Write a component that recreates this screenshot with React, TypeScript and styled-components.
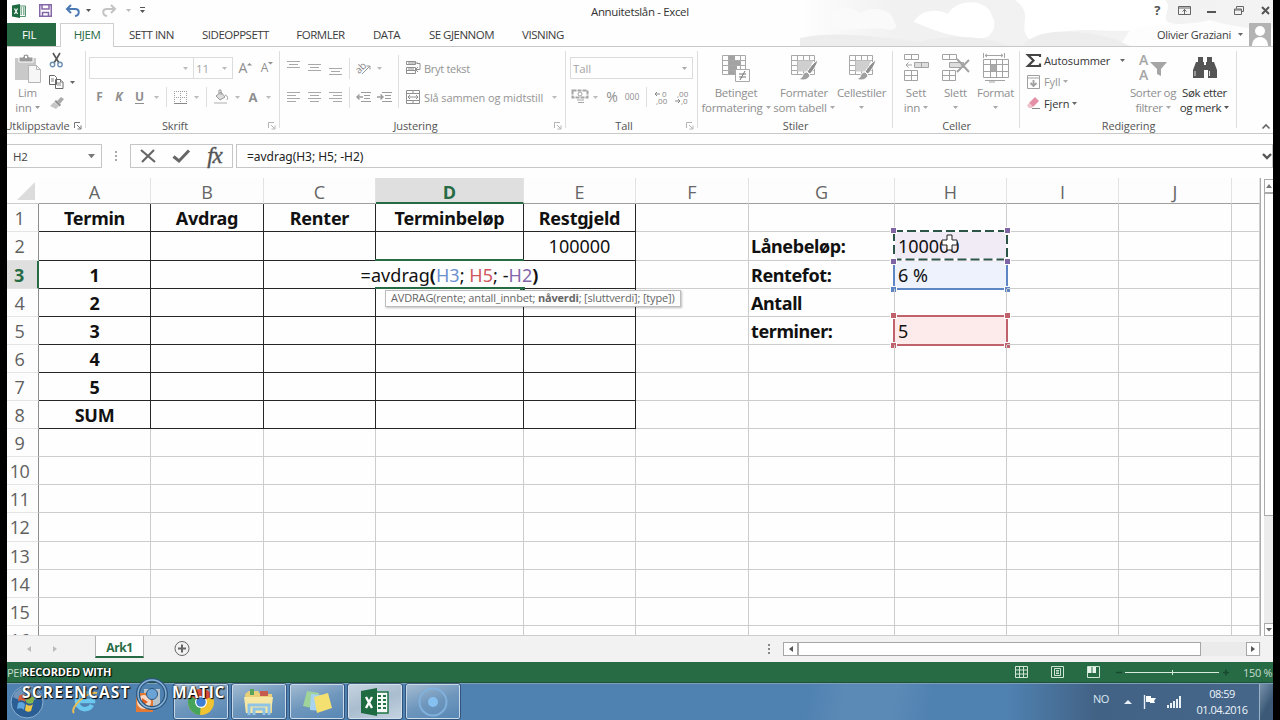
import type { ReactNode } from "react";
import styled, { createGlobalStyle, css } from "styled-components";

const UI = `"Open Sans", "Noto Sans", sans-serif`;
const SHEET = `"Noto Sans", "Open Sans", sans-serif`;
const GREEN = "#276b45";

const GlobalStyle = createGlobalStyle`
  * {
    box-sizing: border-box;
  }

  body {
    margin: 0;
    background: #000;
    overflow: hidden;
  }
`;

const Screen = styled.div`
  position: relative;
  width: 1280px;
  height: 720px;
  padding: 0 7px;
  background: #000;
  font-family: ${UI};
  overflow: hidden;
`;

const Window = styled.div`
  position: relative;
  display: flex;
  flex-direction: column;
  width: 1266px;
  height: 720px;
  background: #fefefe;
  overflow: hidden;
`;

const Clouds = styled.svg`
  position: absolute;
  top: 0;
  right: 0;
  width: 473px;
  height: 46px;
`;

const Svg = styled.svg`
  display: block;
  flex: none;
  overflow: visible;
`;

const Slot = styled.div<{ $w: number; $justify?: string }>`
  display: flex;
  flex: none;
  align-items: center;
  justify-content: ${({ $justify }) => $justify ?? "center"};
  width: ${({ $w }) => $w}px;
`;

/* ---------- title bar ---------- */

const TitleBar = styled.div`
  position: relative;
  display: flex;
  align-items: center;
  height: 23px;
  padding-bottom: 2px;
`;

const TitleText = styled.div`
  width: 98px;
  margin: 2px 0 0 5px;
  color: #333;
  font-size: 11.5px;
  letter-spacing: -0.35px;
  white-space: nowrap;
`;

const TabBar = styled.div`
  position: relative;
  display: flex;
  height: 24px;
  border-bottom: 1px solid #c9c9c9;
`;

const FileTab = styled.div`
  width: 49px;
  margin-right: 4px;
  padding-right: 5px;
  background: ${GREEN};
  color: #fff;
  font-size: 11.5px;
  line-height: 23px;
  text-align: center;
  letter-spacing: -0.3px;
`;

const Tab = styled.div<{ $w: number; $active?: boolean; $ls?: number }>`
  width: ${({ $w }) => $w}px;
  height: 24px;
  color: ${({ $active }) => ($active ? GREEN : "#3c3c3c")};
  font-size: 11.5px;
  line-height: 24px;
  text-align: center;
  white-space: nowrap;
  letter-spacing: ${({ $ls }) => $ls ?? -0.5}px;
  ${({ $active }) =>
    $active &&
    css`
      border: 1px solid #cfcfcf;
      border-bottom: 0;
      background: #fefefe;
      line-height: 21px;
    `}
`;

const UserName = styled.div`
  margin-left: auto;
  color: #3c3c3c;
  font-size: 11px;
  line-height: 23px;
  letter-spacing: -0.25px;
  white-space: nowrap;
`;

/* ---------- ribbon ---------- */

const Ribbon = styled.div`
  display: flex;
  height: 87px;
  border-bottom: 1px solid #c9c9c9;
`;

const Group = styled.div<{ $w: number }>`
  position: relative;
  display: flex;
  flex: none;
  flex-direction: column;
  width: ${({ $w }) => $w}px;

  &::after {
    content: "";
    position: absolute;
    top: 4px;
    right: 0;
    width: 1px;
    height: 77px;
    background: #dedede;
  }
`;

const GroupBody = styled.div`
  display: flex;
  height: 70px;
`;

const GroupLabel = styled.div<{ $shift?: number; $ls?: number }>`
  display: flex;
  align-items: center;
  justify-content: center;
  height: 16px;
  padding-right: ${({ $shift }) => $shift ?? 0}px;
  color: #555;
  font-size: 11px;
  letter-spacing: ${({ $ls }) => $ls ?? -0.1}px;
  white-space: nowrap;
`;

const Launcher = styled.div`
  position: absolute;
  right: 4px;
  bottom: 3px;
`;

const Column = styled.div<{ $w?: number; $pl?: number }>`
  display: flex;
  flex: none;
  flex-direction: column;
  width: ${({ $w }) => ($w ? `${$w}px` : "auto")};
  padding-left: ${({ $pl }) => $pl ?? 0}px;
`;

const ToolRow = styled.div<{ $h?: number; $mt?: number }>`
  display: flex;
  align-items: center;
  height: ${({ $h }) => $h ?? 22}px;
  margin-top: ${({ $mt }) => $mt ?? 0}px;
`;

const Combo = styled.div<{ $w: number; $joined?: boolean }>`
  display: flex;
  flex: none;
  align-items: center;
  justify-content: space-between;
  width: ${({ $w }) => $w}px;
  height: 22px;
  padding: 0 5px 0 2px;
  border: 1px solid #dcdcdc;
  border-left-width: ${({ $joined }) => ($joined ? 0 : 1)}px;
  color: #a5a5a5;
  font-size: 11.5px;
  letter-spacing: -0.1px;
`;

const Letter = styled.span<{ $bold?: boolean; $italic?: boolean; $size?: number; $color?: string }>`
  color: ${({ $color }) => $color ?? "#8f8f8f"};
  font-size: ${({ $size }) => $size ?? 12}px;
  font-weight: ${({ $bold }) => ($bold ? 700 : 400)};
  font-style: ${({ $italic }) => ($italic ? "italic" : "normal")};
  line-height: 1;
`;

const Underlined = styled(Letter)`
  border-bottom: 1px solid #8f8f8f;
`;

const Divider = styled.div<{ $h: number }>`
  flex: none;
  width: 1px;
  height: ${({ $h }) => $h}px;
  background: #dfdfdf;
`;

const ToolText = styled.span<{ $dark?: boolean; $ls?: number }>`
  color: ${({ $dark }) => ($dark ? "#333" : "#949494")};
  font-size: 11px;
  letter-spacing: ${({ $ls }) => $ls ?? -0.1}px;
  white-space: nowrap;
`;

const BigButton = styled.div<{ $w: number; $dark?: boolean; $ls?: number }>`
  display: flex;
  flex: none;
  flex-direction: column;
  align-items: center;
  width: ${({ $w }) => $w}px;
  padding-top: 7px;
  color: ${({ $dark }) => ($dark ? "#333" : "#8f8f8f")};
  font-size: 11.5px;
  line-height: 15px;
  letter-spacing: ${({ $ls }) => $ls ?? -0.15}px;
  white-space: nowrap;
`;

const BigIcon = styled.div`
  height: 31px;
`;

const BigLine = styled.div`
  display: flex;
  align-items: center;
  gap: 3px;
  height: 15px;
`;

/* ---------- formula bar ---------- */

const FormulaBar = styled.div`
  display: flex;
  height: 24px;
  margin-top: 10px;
  color: #333;
`;

const FormulaBox = styled.div<{ $w?: number; $pl?: number }>`
  display: flex;
  flex: ${({ $w }) => ($w ? "none" : 1)};
  align-items: center;
  width: ${({ $w }) => ($w ? `${$w}px` : "auto")};
  padding-left: ${({ $pl }) => $pl ?? 0}px;
  border: 1px solid #c6c6c6;
  font-size: 11.5px;
  letter-spacing: -0.2px;
`;

const NameBox = styled(FormulaBox)`
  justify-content: space-between;
  padding-right: 6px;
  border-left: 0;
  color: #444;
`;

const FormulaText = styled.span`
  flex: 1;
  color: #222;
  font-family: ${SHEET};
  font-size: 12px;
  letter-spacing: -0.03px;
`;

const Fx = styled.span`
  color: #555;
  font-family: "Liberation Serif", serif;
  font-size: 23px;
  font-style: italic;
  letter-spacing: -1px;
  line-height: 20px;
  -webkit-text-stroke: 0.4px #555;
`;

/* ---------- sheet ---------- */

const SheetArea = styled.div`
  display: flex;
  height: 468px;
  padding-top: 10px;
`;

const Grid = styled.div`
  display: grid;
  grid-template-columns: 32px 112px 113px 112px 148px 112px 113px 146px 112px 112px 113px 28px;
  grid-template-rows: 26.4px repeat(15, 28.1px) 1fr;
  width: 1254px;
  height: 459px;
  border-right: 1px solid #ababab;
  border-bottom: 1px solid #ababab;
  overflow: hidden;
`;

const ColHead = styled.div<{ $on?: boolean }>`
  padding-top: 2px;
  border-right: 1px solid #e3e3e3;
  border-bottom: ${({ $on }) => ($on ? `2px solid ${GREEN}` : "1px solid #9f9f9f")};
  background: ${({ $on }) => ($on ? "#dfdfdf" : "#fdfdfd")};
  color: ${({ $on }) => ($on ? GREEN : "#666")};
  font-size: 18px;
  font-weight: ${({ $on }) => ($on ? 700 : 400)};
  line-height: 24px;
  text-align: center;
`;

const Corner = styled.div`
  display: flex;
  align-items: flex-end;
  justify-content: flex-end;
  padding: 0 4px 3px 0;
  border-bottom: 1px solid #ccc;
`;

const RowHead = styled.div<{ $on?: boolean }>`
  padding-right: 6px;
  border-right: ${({ $on }) => ($on ? `2px solid ${GREEN}` : "1px solid #8d8d8d")};
  border-bottom: 1px solid #e4e4e4;
  background: ${({ $on }) => ($on ? "#dfdfdf" : "#fdfdfd")};
  color: ${({ $on }) => ($on ? GREEN : "#606060")};
  font-size: 18px;
  font-weight: ${({ $on }) => ($on ? 700 : 400)};
  line-height: 28px;
  letter-spacing: -0.5px;
  text-align: center;
  overflow: hidden;
`;

const Cell = styled.div<{ $box?: boolean; $bold?: boolean; $center?: boolean; $span?: number; $ls?: number }>`
  position: relative;
  grid-column: span ${({ $span }) => $span ?? 1};
  padding-left: ${({ $center }) => ($center ? 0 : 3)}px;
  border-right: 1px solid ${({ $box }) => ($box ? "#262626" : "#cdcdcd")};
  border-bottom: 1px solid ${({ $box }) => ($box ? "#262626" : "#cdcdcd")};
  color: #111;
  font-family: ${SHEET};
  font-size: 18px;
  font-weight: ${({ $bold }) => ($bold ? 700 : 400)};
  line-height: 28px;
  letter-spacing: ${({ $ls, $bold }) => $ls ?? ($bold ? -0.25 : 0)}px;
  text-align: ${({ $center }) => ($center ? "center" : "left")};
  white-space: nowrap;
`;

const LoanLabel = styled(Cell)`
  padding-left: 2px;
  letter-spacing: -0.4px;
`;

const CellText = styled.span`
  position: relative;
  z-index: 2;
`;

const Ref = styled.span<{ $color: string }>`
  color: ${({ $color }) => $color};
`;

const EditEdge = styled.div<{ $bottom?: boolean }>`
  position: absolute;
  left: 111px;
  width: 149px;
  height: 2px;
  background: ${GREEN};
  ${({ $bottom }) => ($bottom ? "bottom: -1px;" : "top: -2px;")}
`;

const FillHandle = styled.div`
  position: absolute;
  right: 110px;
  bottom: -3px;
  width: 5px;
  height: 4px;
  background: ${GREEN};
`;

const Tooltip = styled.div`
  position: absolute;
  z-index: 3;
  top: 290px;
  left: 385px;
  height: 17px;
  width: 296px;
  padding-left: 5px;
  border: 1px solid #bdbdbd;
  background: #fefefe;
  box-shadow: 1px 1px 2px rgba(0, 0, 0, 0.25);
  color: #666;
  font-size: 11px;
  line-height: 14px;
  letter-spacing: -0.17px;
  white-space: nowrap;
`;

const RangeMark = styled.div<{ $color: string; $fill: string; $dashed?: boolean }>`
  position: absolute;
  inset: -2px;
  border: 2px solid ${({ $color }) => $color};
  background: ${({ $fill }) => $fill};
  ${({ $dashed }) =>
    $dashed &&
    css`
      z-index: 1;
      border: 0;
    `}
`;

const Handle = styled.i<{ $color: string; $x: "left" | "right"; $y: "top" | "bottom"; $out?: boolean }>`
  position: absolute;
  ${({ $x }) => $x}: ${({ $out }) => ($out ? -3 : -5)}px;
  ${({ $y }) => $y}: ${({ $out }) => ($out ? -3 : -5)}px;
  width: 7px;
  height: 7px;
  border: 1px solid #fff;
  background: ${({ $color }) => $color};
`;

const Ants = styled.svg`
  position: absolute;
  inset: 0;
  width: 100%;
  height: 100%;
  overflow: visible;
`;

const CrossCursor = styled.svg`
  position: absolute;
  z-index: 4;
  top: 234px;
  left: 941px;
`;

const ScrollRail = styled.div`
  display: flex;
  flex-direction: column;
  width: 9px;
  margin-left: 3px;
  padding-top: 1px;
  background: #fefefe;
`;

const RailPart = styled.div<{ $h: number; $plain?: boolean }>`
  display: flex;
  flex: none;
  align-items: center;
  justify-content: center;
  height: ${({ $h }) => $h}px;
  border: ${({ $plain }) => ($plain ? "0" : "1px solid #ababab")};
  border-right: 0;
  background: ${({ $plain }) => ($plain ? "#ececec" : "#fefefe")};

  & + & {
    border-top-width: ${({ $plain }) => ($plain ? 0 : 1)}px;
  }
`;

/* ---------- sheet tabs and status bar ---------- */

const SheetTabs = styled.div`
  display: flex;
  height: 26px;
  background: #f2f2f2;
`;

const SheetTab = styled.div`
  width: 49px;
  height: 22px;
  margin-right: 30px;
  border: 1px solid #b5b5b5;
  border-top: 0;
  border-bottom: 2px solid ${GREEN};
  background: #fefefe;
  color: ${GREEN};
  font-size: 12px;
  font-weight: 700;
  line-height: 24px;
  letter-spacing: -0.4px;
  text-align: center;
`;

const ScrollTrack = styled.div`
  display: flex;
  width: 478px;
  height: 14px;
  margin-top: 6px;
  background: #ebebeb;
`;

const ScrollPart = styled.div<{ $w: number }>`
  display: flex;
  flex: none;
  align-items: center;
  justify-content: center;
  width: ${({ $w }) => $w}px;
  border: 1px solid #a6a6a6;
  background: #fefefe;
`;

const StatusBar = styled.div`
  display: flex;
  align-items: center;
  height: 21px;
  border-bottom: 1px solid #20513a;
  background: ${GREEN};
  color: #c5dccd;
  font-size: 11px;
  letter-spacing: -0.3px;
  white-space: nowrap;
`;

/* ---------- taskbar ---------- */

const Taskbar = styled.div`
  display: flex;
  flex: 1;
  border-top: 1px solid #7e9fb8;
  background:
    linear-gradient(90deg, transparent 79%, rgba(62, 88, 118, 0.75) 86%, rgba(66, 94, 125, 0.75) 100%),
    linear-gradient(100deg, transparent 0 63%, rgba(255, 255, 255, 0.07) 66% 70%, transparent 73%),
    #4f81b1;
`;

const TaskButton = styled.div<{ $w: number; $framed?: boolean; $active?: boolean }>`
  display: flex;
  flex: none;
  align-items: center;
  justify-content: center;
  width: ${({ $w }) => $w}px;
  height: 35px;
  ${({ $framed, $active }) =>
    $framed &&
    css`
      margin: 0 2px;
      border: 1px solid rgba(215, 229, 241, 0.85);
      border-radius: 2px;
      outline: 1px solid rgba(24, 48, 78, 0.55);
      background: ${$active
        ? "linear-gradient(160deg, #c6d3df, #a9bdcf 50%, #c3d2df)"
        : "linear-gradient(160deg, #a2bad0, #6f97bd 50%, #5787b4)"};
    `}
`;

const Clock = styled.div`
  width: 58px;
  padding-top: 2px;
  color: #eef4f9;
  font-size: 11px;
  line-height: 16px;
  letter-spacing: -0.5px;
  text-align: center;
  white-space: nowrap;
`;

const Lang = styled.div`
  width: 26px;
  color: #dde8f1;
  font-size: 11px;
  letter-spacing: -0.6px;
  line-height: 30px;
`;

const ShowDesktop = styled.div`
  width: 14px;
  margin-left: auto;
  border-left: 1px solid #9db3c6;
  background: linear-gradient(120deg, #7892ab, #3c5a78 60%);
`;

/* ---------- recorder watermark ---------- */

const Watermark = styled.div`
  position: absolute;
  z-index: 5;
  top: 664px;
  left: 22px;
  color: #fff;
  font-weight: 700;
  text-shadow: 1px 1px 1px #000, 0 0 2px #000;
`;

const WatermarkSmall = styled.div`
  font-size: 11px;
  line-height: 15px;
  letter-spacing: -0.12px;
  white-space: nowrap;
`;

const WatermarkLarge = styled.div`
  display: flex;
  align-items: center;
  height: 30px;
  font-size: 15.5px;
  letter-spacing: 1.2px;
`;

const WatermarkWord = styled.span<{ $w?: number; $ls?: number }>`
  width: ${({ $w }) => ($w ? `${$w}px` : "auto")};
  line-height: 26px;
  padding-bottom: 4px;
  letter-spacing: ${({ $ls }) => $ls ?? 1.2}px;
`;

const Caret = ({ color = "#999", size = 5 }: { color?: string; size?: number }) => (
  <Svg width={size} height={size * 0.6} viewBox="0 0 5 3">
    <path d="M0 0h5L2.5 3z" fill={color} />
  </Svg>
);

const LauncherIcon = ({ color = "#b5b5b5" }: { color?: string }) => (
  <Launcher>
    <Svg width="8" height="8" viewBox="0 0 8 8" fill="none" stroke={color}>
      <path d="M.5 6V.5H6M3 3l3.5 3.5M7 3.5V7H3.5" />
    </Svg>
  </Launcher>
);

const Lines = ({ rows }: { rows: [number, number, number][] }) => (
  <Svg width="14" height="14" viewBox="0 0 14 14" stroke="#a9a9a9">
    {rows.map(([x, w, y]) => (
      <path key={y} d={`M${x} ${y + 0.5}h${w}`} />
    ))}
  </Svg>
);

const ExcelIcon = ({ size }: { size: number }) => (
  <Svg width={size} height={size} viewBox="0 0 28 28">
    <path d="M15 4h12v21H15z" fill="#f6faf7" stroke="#217346" strokeWidth="1.5" />
    <path d="M17 8h3M22 8h3M17 12h3M22 12h3M17 16h3M22 16h3M17 20h3M22 20h3" stroke="#217346" strokeWidth="2" />
    <path d="M0 3l16-3v28L0 25z" fill="#1e6b41" />
    <path d="M5 9l6 11M11 9L5 20" stroke="#fff" strokeWidth="2.4" />
  </Svg>
);

const TableIcon = ({ children, x = 0 }: { children?: ReactNode; x?: number }) => (
  <Svg width="28" height="30" viewBox="0 0 28 30" fill="none" stroke="#a9a9a9">
    <g transform={`translate(${x} 0)`}>
      <path d="M.5 1.5h23v19H.5zM.5 6.5h23M.5 11.5h23M.5 16.5h23M6.5 1.5v19M12.5 1.5v19M18.5 1.5v19" />
      {children}
    </g>
  </Svg>
);

const BrushOverlay = () => (
  <>
    <path d="M6.5 6.5h16l-6 11h-10z" fill="#cfcfcf" stroke="none" />
    <path d="M27 6c-4 2-9 8-11 12l3 2c3-3 7-9 8-14z" fill="#909090" stroke="#fff" />
    <path d="M16 18c-3 0-4 2-5 5-1 1-3 2-4 2 5 2 11 1 12-4z" fill="#a0a0a0" stroke="#fff" />
  </>
);

const PasteIcon = () => (
  <Svg width="28" height="30" viewBox="0 0 28 30">
    <path d="M1 4h21v22H1z" fill="#c9c9c9" />
    <path d="M5 8V3h4c0-4 6-4 6 0h4v5z" fill="#999" stroke="#fff" />
    <circle cx="12" cy="3" r="1.2" fill="#fff" />
    <path d="M14.500 11.500h8l4 4v13h-12z" fill="#f6f6f6" stroke="#b5b5b5" />
    <path d="M22.500 11.500v4h4" fill="none" stroke="#b5b5b5" />
  </Svg>
);

const ClipboardGroup = () => (
  <Group $w={79}>
    <GroupBody>
      <BigButton $w={41}>
        <BigIcon>
          <PasteIcon />
        </BigIcon>
        <BigLine>Lim</BigLine>
        <BigLine>
          inn <Caret />
        </BigLine>
      </BigButton>
      <Column $pl={1}>
        <ToolRow $h={26}>
          <Svg width="15" height="15" viewBox="0 0 15 15" fill="none">
            <path d="M4 0l6 10M11 0L5 10" stroke="#555" strokeWidth="1.6" />
            <circle cx="3.500" cy="11.500" r="2.200" stroke="#6d8fb0" strokeWidth="1.400" />
            <circle cx="11" cy="11.500" r="2.200" stroke="#6d8fb0" strokeWidth="1.400" />
          </Svg>
        </ToolRow>
        <ToolRow $h={18}>
          <Svg width="15" height="14" viewBox="0 0 15 14" fill="#fff" stroke="#666">
            <path d="M.5.500h5l2 2v7h-7zM6.500 4.500h5l2.500 2.500v6.500H6.500z" />
            <path d="M2 4h3M2 6h3M8 8h4M8 10h4M11.500 4.500V7H14" strokeWidth=".8" />
          </Svg>
          <Slot $w={16}>
            <Caret color="#666" />
          </Slot>
        </ToolRow>
        <ToolRow $h={24}>
          <Svg width="16" height="14" viewBox="0 0 16 14">
            <path d="M12 1l3 2-4 5-3-3z" fill="#aaa" />
            <path d="M7 4l5 5-1.500 1.500-5-5z" fill="#8f8f8f" />
            <path d="M5 6l5 4-3 3-6-3z" fill="#c6c6c6" />
          </Svg>
        </ToolRow>
      </Column>
    </GroupBody>
    <GroupLabel $shift={19} $ls={-0.1}>
      Utklippstavle
    </GroupLabel>
    <LauncherIcon color="#777" />
  </Group>
);

const FontGroup = () => (
  <Group $w={194}>
    <GroupBody>
      <Column $pl={3}>
        <ToolRow $mt={10}>
          <Combo $w={105}>
            <span />
            <Caret color="#bbb" />
          </Combo>
          <Combo $w={39} $joined>
            11
            <Caret color="#bbb" />
          </Combo>
          <Slot $w={25}>
            <Letter $size={14}>A</Letter>
            <Svg width="5" height="12" viewBox="0 0 5 12">
              <path d="M0 3.500L2.500 1 5 3.500z" fill="#8f8f8f" />
            </Svg>
          </Slot>
          <Slot $w={18}>
            <Letter $size={12}>A</Letter>
            <Svg width="5" height="12" viewBox="0 0 5 12">
              <path d="M0 0h5L2.500 2.500z" fill="#8f8f8f" />
            </Svg>
          </Slot>
        </ToolRow>
        <ToolRow $mt={7}>
          <Slot $w={21}>
            <Letter $bold>F</Letter>
          </Slot>
          <Slot $w={18}>
            <Letter $bold $italic>
              K
            </Letter>
          </Slot>
          <Slot $w={23}>
            <Underlined $bold>U</Underlined>
          </Slot>
          <Slot $w={10}>
            <Caret color="#bbb" />
          </Slot>
          <Slot $w={11}>
            <Divider $h={20} />
          </Slot>
          <Slot $w={16}>
            <Svg width="13" height="13" viewBox="0 0 13 13" stroke="#a0a0a0">
              <path d="M.5 0v12M6.500 0v12M12.500 0v12M0 .5h13M0 6.500h13" strokeDasharray="1 1" />
              <path d="M0 12.500h13" stroke="#888" />
            </Svg>
          </Slot>
          <Slot $w={16}>
            <Caret color="#bbb" />
          </Slot>
          <Slot $w={5}>
            <Divider $h={20} />
          </Slot>
          <Slot $w={24}>
            <Svg width="15" height="15" viewBox="0 0 15 15">
              <path d="M2 6l5-4 4 5-5 3z" fill="#ddd" stroke="#999" />
              <path d="M5 4V0h2v5M11 5c3 1 3 3 2 5" fill="none" stroke="#999" />
              <path d="M0 12h13v2H0z" fill="#d6d6d6" />
            </Svg>
          </Slot>
          <Slot $w={9}>
            <Caret color="#bbb" />
          </Slot>
          <Slot $w={22}>
            <Letter $bold $size={13}>
              A
            </Letter>
          </Slot>
          <Slot $w={9}>
            <Caret color="#bbb" />
          </Slot>
        </ToolRow>
      </Column>
    </GroupBody>
    <GroupLabel $shift={16}>Skrift</GroupLabel>
    <LauncherIcon />
  </Group>
);

const AlignGroup = () => (
  <Group $w={286}>
    <GroupBody>
      <Column $pl={3}>
        <ToolRow $mt={10}>
          <Slot $w={21}>
            <Lines rows={[[0, 13, 0], [2, 9, 3], [0, 13, 6]]} />
          </Slot>
          <Slot $w={21}>
            <Lines rows={[[0, 13, 3], [2, 9, 6], [0, 13, 9]]} />
          </Slot>
          <Slot $w={21}>
            <Lines rows={[[0, 13, 7], [2, 9, 10], [0, 13, 13]]} />
          </Slot>
          <Slot $w={6}>
            <Divider $h={21} />
          </Slot>
          <Slot $w={24}>
            <Svg width="16" height="14" viewBox="0 0 16 14">
              <text x="-1" y="10" fontSize="10" fill="#888" transform="rotate(-45 5 7)">
                ab
              </text>
              <path d="M6 13l8-8M14 8.500V5h-3.500" fill="none" stroke="#999" />
            </Svg>
          </Slot>
          <Slot $w={6}>
            <Caret color="#bbb" />
          </Slot>
        </ToolRow>
        <ToolRow $mt={7}>
          <Slot $w={21}>
            <Lines rows={[[0, 13, 2], [0, 9, 5], [0, 13, 8], [0, 9, 11]]} />
          </Slot>
          <Slot $w={21}>
            <Lines rows={[[0, 13, 2], [2, 9, 5], [0, 13, 8], [2, 9, 11]]} />
          </Slot>
          <Slot $w={21}>
            <Lines rows={[[0, 13, 2], [4, 9, 5], [0, 13, 8], [4, 9, 11]]} />
          </Slot>
          <Slot $w={6}>
            <Divider $h={21} />
          </Slot>
          <Slot $w={22}>
            <Svg width="15" height="11" viewBox="0 0 15 11" fill="none" stroke="#9c9c9c">
              <path d="M5 .5h10M8 3.500h6M8 6.500h6M5 9.500h10" />
              <path d="M7 5H1M3.500 2.500L1 5l2.500 2.500" strokeWidth="1.400" />
            </Svg>
          </Slot>
          <Slot $w={20}>
            <Svg width="15" height="11" viewBox="0 0 15 11" fill="none" stroke="#9c9c9c">
              <path d="M5 .5h10M8 3.500h6M8 6.500h6M5 9.500h10" />
              <path d="M0 5h6M3.500 2.500L6 5 3.500 7.500" strokeWidth="1.400" />
            </Svg>
          </Slot>
        </ToolRow>
      </Column>
      <Column $w={12} $pl={4}>
        <ToolRow $mt={8} $h={53}>
          <Divider $h={53} />
        </ToolRow>
      </Column>
      <Column>
        <ToolRow $mt={10}>
          <Slot $w={18} $justify="flex-start">
            <Svg width="15" height="14" viewBox="0 0 15 14" fill="none" stroke="#8f8f8f">
              <path d="M.5.500h9v3h-9zM.5 6.500h9v3h-9zM.5 9.500h9v3h-9z" />
              <path d="M11 2.500h3v6h-4M12 6l-2.500 2.500L12 11M2 2h10M2 8h6" />
            </Svg>
          </Slot>
          <ToolText $ls={-0.3}>Bryt tekst</ToolText>
        </ToolRow>
        <ToolRow $mt={7}>
          <Slot $w={18} $justify="flex-start">
            <Svg width="14" height="14" viewBox="0 0 14 14" fill="none" stroke="#8f8f8f">
              <path d="M.5.500h13v13H.5zM.5 3.500h13M.5 10.500h13M7 .5v3M7 10.500v3M2 7h10M4 5L2 7l2 2M10 5l2 2-2 2" />
            </Svg>
          </Slot>
          <ToolText $ls={-0.12}>Slå sammen og midtstill</ToolText>
          <Slot $w={22}>
            <Caret color="#bbb" />
          </Slot>
        </ToolRow>
      </Column>
    </GroupBody>
    <GroupLabel $shift={15}>Justering</GroupLabel>
    <LauncherIcon />
  </Group>
);

const NumberGroup = () => (
  <Group $w={132}>
    <GroupBody>
      <Column $pl={4}>
        <ToolRow $mt={10}>
          <Combo $w={123}>
            Tall
            <Caret color="#aaa" />
          </Combo>
        </ToolRow>
        <ToolRow $mt={7}>
          <Slot $w={20}>
            <Svg width="16" height="14" viewBox="0 0 16 14" fill="none" stroke="#a5a5a5">
              <path d="M.5.500h15v7H.5z" strokeWidth="2" strokeDasharray="4 1" />
              <circle cx="8" cy="4" r="2" />
              <path d="M5 10h7M6 12.500h6" />
            </Svg>
          </Slot>
          <Slot $w={11}>
            <Caret color="#bbb" />
          </Slot>
          <Slot $w={22}>
            <Letter $size={14}>%</Letter>
          </Slot>
          <Slot $w={18}>
            <Letter $size={8.5}>000</Letter>
          </Slot>
          <Slot $w={11}>
            <Divider $h={20} />
          </Slot>
          <Slot $w={18}>
            <Svg width="14" height="13" viewBox="0 0 14 13" fill="#888">
              <path d="M6 3H1M3 1L1 3l2 2" fill="none" stroke="#888" />
              <text x="8" y="6" fontSize="8">0</text>
              <text x="2" y="13" fontSize="8">,00</text>
            </Svg>
          </Slot>
          <Slot $w={24}>
            <Svg width="14" height="13" viewBox="0 0 14 13" fill="#888">
              <text x="2" y="6" fontSize="8">,00</text>
              <path d="M0 10h5M3 8l2 2-2 2" fill="none" stroke="#888" />
              <text x="6" y="13" fontSize="8">,0</text>
            </Svg>
          </Slot>
        </ToolRow>
      </Column>
    </GroupBody>
    <GroupLabel $shift={16}>Tall</GroupLabel>
    <LauncherIcon />
  </Group>
);

const StylesGroup = () => (
  <Group $w={195}>
    <GroupBody>
      <BigButton $w={76} $ls={-0.25}>
        <BigIcon>
          <TableIcon>
            <path d="M7 2h6v4H7zM7 7h11v4H7zM7 12h8v4H7zM7 17h5v3H7z" fill="#a3a3a3" stroke="none" />
            <path d="M13.500 15.500h14v12h-14z" fill="#fff" />
            <path d="M17 20h7M17 23h7M23 17l-5 9" stroke="#777" />
          </TableIcon>
        </BigIcon>
        <BigLine>Betinget</BigLine>
        <BigLine>
          formatering <Caret color="#aaa" />
        </BigLine>
      </BigButton>
      <BigButton $w={60} $ls={-0.25}>
        <BigIcon>
          <TableIcon x={1}>
            <BrushOverlay />
          </TableIcon>
        </BigIcon>
        <BigLine>Formater</BigLine>
        <BigLine>
          som tabell <Caret color="#aaa" />
        </BigLine>
      </BigButton>
      <BigButton $w={55} $ls={-0.3}>
        <BigIcon>
          <TableIcon x={1}>
            <BrushOverlay />
          </TableIcon>
        </BigIcon>
        <BigLine>Cellestiler</BigLine>
        <BigLine>
          <Caret color="#aaa" />
        </BigLine>
      </BigButton>
    </GroupBody>
    <GroupLabel>Stiler</GroupLabel>
  </Group>
);

const CellsGroup = () => (
  <Group $w={127}>
    <GroupBody>
      <BigButton $w={46}>
        <BigIcon>
          <Svg width="25" height="28" viewBox="0 0 25 28" fill="none" stroke="#a3a3a3">
            <path d="M.5.500h14v5H.5zM7.500.500v5M.5 16.500h13v10H.5zM.5 21.500h13M7.500 16.500v10" />
            <path d="M10.500 8.500h14v5h-14zM17.500 8.500v5" fill="#ddd" />
            <path d="M8 11H2M4.500 8.500L2 11l2.500 2.500" />
          </Svg>
        </BigIcon>
        <BigLine>Sett</BigLine>
        <BigLine>
          inn <Caret color="#aaa" />
        </BigLine>
      </BigButton>
      <BigButton $w={33}>
        <BigIcon>
          <Svg width="28" height="28" viewBox="0 0 28 28" fill="none" stroke="#a3a3a3">
            <path d="M.5.500h14v5H.5zM7.500.500v5M.5 16.500h13v10H.5zM.5 21.500h13M7.500 16.500v10" />
            <path d="M7.500 8.500h14v5h-14z" fill="#ddd" />
            <path d="M15 5l12 13M27 6L15 18" strokeWidth="2" />
          </Svg>
        </BigIcon>
        <BigLine>Slett</BigLine>
        <BigLine>
          <Caret color="#aaa" />
        </BigLine>
      </BigButton>
      <BigButton $w={47} $ls={-0.3}>
        <BigIcon>
          <Svg width="26" height="29" viewBox="0 0 26 29" fill="none" stroke="#a3a3a3">
            <path d="M.5-1v5M21.500-1v5M2 1.500h18M4 0L2 1.500 4 3M18 0l2 1.500L18 3" />
            <path d="M.5 5.500h25v18H.5zM.5 10.500h25M.5 17.500h25M7.500 5.500v18M13.500 5.500v18M19.500 5.500v18" />
            <path d="M7.500 10.500h6v7h-6z" fill="#aaa" />
            <path d="M2 26.500h20M6 28h6" />
          </Svg>
        </BigIcon>
        <BigLine>Format</BigLine>
        <BigLine>
          <Caret color="#aaa" />
        </BigLine>
      </BigButton>
    </GroupBody>
    <GroupLabel>Celler</GroupLabel>
  </Group>
);

const EditGroup = () => (
  <Group $w={217}>
    <GroupBody>
      <Column $w={107} $pl={7}>
        <ToolRow $mt={2}>
          <Slot $w={17} $justify="flex-start">
            <Svg width="14" height="13" viewBox="0 0 14 13">
              <path d="M13 3V1H1l5.500 5.500L1 12h12v-2.500" fill="none" stroke="#444" strokeWidth="2.200" />
            </Svg>
          </Slot>
          <ToolText $dark $ls={-0.1}>
            Autosummer
          </ToolText>
          <Slot $w={24}>
            <Caret color="#666" />
          </Slot>
        </ToolRow>
        <ToolRow $h={21}>
          <Slot $w={17} $justify="flex-start">
            <Svg width="13" height="14" viewBox="0 0 13 14" fill="none" stroke="#a0a0a0">
              <path d="M.5.500h12v13H.5zM.5 3h12" />
              <path d="M6.500 5v6M3.500 8l3 3 3-3" strokeWidth="1.800" />
            </Svg>
          </Slot>
          <ToolText>Fyll</ToolText>
          <Slot $w={10}>
            <Caret color="#aaa" />
          </Slot>
        </ToolRow>
        <ToolRow>
          <Slot $w={17} $justify="flex-start">
            <Svg width="14" height="12" viewBox="0 0 14 12">
              <path d="M2 6l6-6 4 4-6 6z" fill="#e491a7" />
              <path d="M2 6l4 4-1.500 1H2L0 8.500z" fill="#eec1cc" />
              <path d="M5 11.500h8" stroke="#888" />
            </Svg>
          </Slot>
          <ToolText $dark $ls={-0.1}>
            Fjern
          </ToolText>
          <Slot $w={10}>
            <Caret color="#666" />
          </Slot>
        </ToolRow>
      </Column>
      <BigButton $w={52} $ls={-0.35}>
        <BigIcon>
          <Svg width="28" height="28" viewBox="0 0 28 28" fill="#a5a5a5">
            <text x="0" y="11" fontSize="14" fontWeight="600">A</text>
            <text x="0" y="26" fontSize="14" fontWeight="600">A</text>
            <path d="M11 8h17l-6 7v7l-4-2v-5z" />
          </Svg>
        </BigIcon>
        <BigLine>Sorter og</BigLine>
        <BigLine>
          filtrer <Caret color="#aaa" />
        </BigLine>
      </BigButton>
      <BigButton $w={51} $dark $ls={-0.35}>
        <BigIcon>
          <Svg width="26" height="26" viewBox="0 0 26 26" fill="#555">
            <path d="M6 3h5v5h1v3h2V8h1V3h5v5h2l3 8v8h-9v-8h-4v8H1v-8l3-8h2z" />
            <path d="M3 17v5M17.500 17v5" stroke="#fff" strokeWidth=".8" />
          </Svg>
        </BigIcon>
        <BigLine>Søk etter</BigLine>
        <BigLine>
          og merk <Caret color="#555" />
        </BigLine>
      </BigButton>
    </GroupBody>
    <GroupLabel>Redigering</GroupLabel>
  </Group>
);

const WindowTop = () => (
  <>
    <Clouds viewBox="0 0 473 46">
      <defs>
        <linearGradient id="sky" x1="0" x2="1" y1="0" y2="0">
          <stop offset="0" stopColor="#f0f0f0" stopOpacity="0" />
          <stop offset=".2" stopColor="#f1f1f1" />
          <stop offset="1" stopColor="#f3f3f3" />
        </linearGradient>
      </defs>
      <path d="M0 0h473v46H0z" fill="url(#sky)" />
      <path d="M30 20c2-14 22-16 30-6 12-10 34-4 34 8 4 4 2 8-4 8-20-4-40 2-56-2-4-2-6-4-4-8z" fill="#fafafa" />
      <path d="M114 22c6-12 22-14 34-8 8-16 40-16 44 2 6 10 0 20-8 22-30 0-46-6-70-16z" fill="#fff" />
      <path d="M215 0h150c10 8-10 22 10 24-30 10-70 6-90 6-22 0-40 6-52 12-20-14 4-26-18-42z" fill="#fff" />
      <path d="M330 30c30-8 60-4 80-10 20 6 40 10 63 8v18H320z" fill="#fdfdfd" />
      <path d="M0 38c40-8 80 0 120 4 30-8 60-6 90 4H0z" fill="#ededed" />
      <path d="M222 46c14-16 40-16 62-13 20 2 32 6 46 13z" fill="#ededed" />
    </Clouds>
    <TitleBar>
      <Slot $w={23}>
        <ExcelIcon size={14} />
      </Slot>
      <Slot $w={30}>
        <Svg width="13" height="13" viewBox="0 0 13 13" fill="none" stroke="#8567a8" strokeWidth="1.500">
          <path d="M.75.750h11.500v11.500H.75zM3 .75V5h7V.75M3.500 12V8.500h6V12" />
        </Svg>
      </Slot>
      <Slot $w={26}>
        <Svg width="14" height="12" viewBox="0 0 14 12" fill="none" stroke="#4a79b4" strokeWidth="2">
          <path d="M1 4h8c5 0 5 6 0 7M5 0L1 4l4 4" />
        </Svg>
      </Slot>
      <Slot $w={4}>
        <Caret color="#555" />
      </Slot>
      <Slot $w={38}>
        <Svg width="14" height="12" viewBox="0 0 14 12" fill="none" stroke="#c3c3c3" strokeWidth="2">
          <path d="M13 4H5C0 4 0 10 5 11M9 0l4 4-4 4" />
        </Svg>
      </Slot>
      <Slot $w={1}>
        <Caret color="#bbb" />
      </Slot>
      <Slot $w={27}>
        <Svg width="5" height="7" viewBox="0 0 5 7">
          <path d="M0 .5h5" stroke="#555" />
          <path d="M0 3h5L2.500 6z" fill="#555" />
        </Svg>
      </Slot>
      <Slot $w={430} />
      <TitleText>Annuitetslån - Excel</TitleText>
      <Slot $w={455} />
      <Slot $w={27}>
        <Letter $bold $size={13} $color="#555">
          ?
        </Letter>
      </Slot>
      <Slot $w={27}>
        <Svg width="13" height="9" viewBox="0 0 13 9" fill="none" stroke="#666">
          <path d="M.5.500h12v8H.5zM.5 2h12M6.500 8V3.500M4.500 5.500l2-2 2 2" />
        </Svg>
      </Slot>
      <Slot $w={27}>
        <Svg width="9" height="5" viewBox="0 0 9 5">
          <path d="M0 4h9" stroke="#555" strokeWidth="2" />
        </Svg>
      </Slot>
      <Slot $w={28}>
        <Svg width="10" height="9" viewBox="0 0 10 9" fill="none" stroke="#666">
          <path d="M2.500 2.500v-2h7v5h-2M.5 3h7v5.500h-7zM.5 4h7" />
        </Svg>
      </Slot>
      <Slot $w={26}>
        <Svg width="9" height="9" viewBox="0 0 9 9">
          <path d="M1 1l7 7M8 1L1 8" stroke="#555" strokeWidth="2" />
        </Svg>
      </Slot>
    </TitleBar>
    <TabBar>
      <FileTab>FIL</FileTab>
      <Tab $w={54} $active $ls={-0.4}>
        HJEM
      </Tab>
      <Tab $w={75}>SETT INN</Tab>
      <Tab $w={93}>SIDEOPPSETT</Tab>
      <Tab $w={77}>FORMLER</Tab>
      <Tab $w={55}>DATA</Tab>
      <Tab $w={95}>SE GJENNOM</Tab>
      <Tab $w={68}>VISNING</Tab>
      <UserName>Olivier Graziani</UserName>
      <Slot $w={18}>
        <Caret color="#666" />
      </Slot>
      <Svg width="24" height="23" viewBox="0 0 24 23">
        <path d="M0 0h22v23H0z" fill="#b3b3b3" />
        <circle cx="11" cy="8" r="5" fill="#fff" />
        <path d="M3 23c0-12 16-12 16 0z" fill="#fff" />
      </Svg>
    </TabBar>
  </>
);

const columns = "ABCDEFGHIJ".split("");
const headings = ["Termin", "Avdrag", "Renter", "Terminbeløp", "Restgjeld"];
const terms: Record<number, string> = { 3: "1", 4: "2", 5: "3", 6: "4", 7: "5", 8: "SUM" };
const loanLabels: Record<number, string> = { 2: "Lånebeløp:", 3: "Rentefot:", 4: "Antall", 5: "terminer:" };

const Handles = ({ color, out, bottomOnly }: { color: string; out?: boolean; bottomOnly?: boolean }) => (
  <>
    {!bottomOnly && <Handle $color={color} $x="left" $y="top" $out={out} />}
    {!bottomOnly && <Handle $color={color} $x="right" $y="top" $out={out} />}
    <Handle $color={color} $x="left" $y="bottom" $out={out} />
    <Handle $color={color} $x="right" $y="bottom" $out={out} />
  </>
);

const LoanValue = ({ row }: { row: number }) => {
  if (row === 2) {
    return (
      <Cell $ls={-0.05}>
        <RangeMark $color="#8065a5" $fill="#f0ebf5" $dashed>
          <Ants>
            <rect x="1" y="1" width="113" height="28.500" fill="none" stroke="#fff" strokeWidth="2" />
            <rect x="1" y="1" width="113" height="28.500" fill="none" stroke="#2c5548" strokeWidth="2" strokeDasharray="9 4" />
          </Ants>
          <Handles color="#8065a5" out />
        </RangeMark>
        <CellText>100000</CellText>
      </Cell>
    );
  }
  if (row === 3) {
    return (
      <Cell>
        <RangeMark $color="#5f86c4" $fill="#edf2fc">
          <Handles color="#5f86c4" bottomOnly />
        </RangeMark>
        <CellText>6 %</CellText>
      </Cell>
    );
  }
  if (row === 5) {
    return (
      <Cell>
        <RangeMark $color="#c0626b" $fill="#fcebea">
          <Handles color="#c0626b" />
        </RangeMark>
        <CellText>5</CellText>
      </Cell>
    );
  }
  return <Cell />;
};

const TableCells = ({ row }: { row: number }) => {
  if (row === 1) {
    return headings.map((h) => (
      <Cell key={h} $box $bold $center>
        {h}
      </Cell>
    ));
  }
  if (row === 3) {
    return (
      <>
        <Cell $box $bold $center>
          1
        </Cell>
        <Cell $box />
        <Cell $box $center $span={3} $ls={0.05}>
          =avdrag<b>(</b>
          <Ref $color="#6c8fd0">H3</Ref>; <Ref $color="#d0565e">H5</Ref>; -<Ref $color="#8467ab">H2</Ref>
          <b>)</b>
          <EditEdge />
          <EditEdge $bottom />
          <FillHandle />
        </Cell>
      </>
    );
  }
  const boxed = row <= 8;
  return ["A", "B", "C", "D", "E"].map((col) => (
    <Cell key={col} $box={boxed} $bold={col === "A"} $center>
      {col === "A" ? terms[row] : row === 2 && col === "E" ? "100000" : null}
    </Cell>
  ));
};

const SheetRow = ({ row }: { row: number }) => (
  <>
    <RowHead $on={row === 3}>{row}</RowHead>
    <TableCells row={row} />
    <Cell />
    <LoanLabel $bold>{loanLabels[row]}</LoanLabel>
    <LoanValue row={row} />
    <Cell />
    <Cell />
    <Cell />
  </>
);

const Sheet = () => (
  <SheetArea>
    <Grid>
      <Corner>
        <Svg width="18" height="18" viewBox="0 0 18 18">
          <path d="M18 0v18H0z" fill="#dcdcdc" />
        </Svg>
      </Corner>
      {columns.map((c) => (
        <ColHead key={c} $on={c === "D"}>
          {c}
        </ColHead>
      ))}
      <ColHead />
      {Array.from({ length: 16 }, (_, i) => i + 1).map((row) => (
        <SheetRow key={row} row={row} />
      ))}
    </Grid>
    <ScrollRail>
      <RailPart $h={14}>
        <Svg width="6" height="4" viewBox="0 0 6 4">
          <path d="M0 4h6L3 0z" fill="#777" />
        </Svg>
      </RailPart>
      <RailPart $h={323} />
      <RailPart $h={107} $plain />
      <RailPart $h={13}>
        <Caret color="#666" size={6} />
      </RailPart>
    </ScrollRail>
  </SheetArea>
);

const BottomBars = () => (
  <>
    <SheetTabs>
      <Slot $w={43}>
        <Svg width="4" height="6" viewBox="0 0 4 6">
          <path d="M4 0v6L0 3z" fill="#bbb" />
        </Svg>
      </Slot>
      <Slot $w={10}>
        <Svg width="4" height="6" viewBox="0 0 4 6">
          <path d="M0 0v6l4-3z" fill="#bbb" />
        </Svg>
      </Slot>
      <Slot $w={35} />
      <SheetTab>Ark1</SheetTab>
      <Svg width="16" height="26" viewBox="0 0 16 26" fill="none" stroke="#666">
        <circle cx="8" cy="12.500" r="7" />
        <path d="M4 12.500h8M8 8.500v8" strokeWidth="2" />
      </Svg>
      <Slot $w={578} />
      <Slot $w={15} $justify="flex-start">
        <Svg width="2" height="10" viewBox="0 0 2 10" fill="#888">
          <path d="M0 0h2v2H0zM0 4h2v2H0zM0 8h2v2H0z" />
        </Svg>
      </Slot>
      <ScrollTrack>
        <ScrollPart $w={15}>
          <Svg width="4" height="6" viewBox="0 0 4 6">
            <path d="M4 0v6L0 3z" fill="#555" />
          </Svg>
        </ScrollPart>
        <ScrollPart $w={403} />
        <Slot $w={45} />
        <ScrollPart $w={14}>
          <Svg width="4" height="6" viewBox="0 0 4 6">
            <path d="M0 0v6l4-3z" fill="#555" />
          </Svg>
        </ScrollPart>
      </ScrollTrack>
    </SheetTabs>
    <StatusBar>
      <Slot $w={1008} $justify="flex-start">
        PEK
      </Slot>
      <Slot $w={36} $justify="flex-start">
        <Svg width="13" height="12" viewBox="0 0 13 12" fill="none" stroke="#cfe6d7">
          <path d="M.5.500h12v11H.5zM.5 4h12M.5 8h12M4.500.500v11M8.500.500v11" />
        </Svg>
      </Slot>
      <Slot $w={36} $justify="flex-start">
        <Svg width="13" height="12" viewBox="0 0 13 12" fill="none" stroke="#cfe6d7">
          <path d="M.5.500h12v11H.5zM3.500 2.500h6v7h-6zM5 4.500h3M5 6h3M5 7.500h3" />
        </Svg>
      </Slot>
      <Slot $w={29} $justify="flex-start">
        <Svg width="13" height="12" viewBox="0 0 13 12" fill="none" stroke="#cfe6d7">
          <path d="M.5.500h12v11H.5z" />
          <path d="M1 1h3.500v6H1zM5.500 1H9v6H5.500z" fill="#e7f3eb" stroke="none" />
        </Svg>
      </Slot>
      <Slot $w={113} $justify="flex-start">
        <Svg width="113" height="9" viewBox="0 0 113 9">
          <path d="M0 4.500h6M107 4.500h6M110 1.500v6" stroke="#18482d" strokeWidth="1.500" />
          <path d="M9 4.500h94M56.500 2v5" stroke="#d9eade" />
        </Svg>
      </Slot>
      <Slot $w={14} />
      150 %
    </StatusBar>
  </>
);

const TaskIcons = () => (
  <>
    <TaskButton $w={40}>
      <Svg width="34" height="34" viewBox="0 0 34 34">
        <circle cx="17" cy="17" r="16" fill="#2a5e94" stroke="#8fb2cf" />
        <path d="M3 12c4-13 24-13 28 0-8 5-20 5-28 0z" fill="#8fadc8" opacity=".7" />
        <path d="M9 11c3-2 5-2 7 0l-1 6c-2-2-4-2-7-1z" fill="#d9603c" />
        <path d="M17 11c3 2 5 1 8 0l-2 7c-3 1-5 1-7-1z" fill="#85b54b" />
        <path d="M8 18c3-2 5-1 7 1l-1 6c-2-2-4-2-7-1z" fill="#5fa6df" />
        <path d="M16 19c2 2 5 2 7 0l-2 7c-2 1-5 1-6-1z" fill="#f1c644" />
      </Svg>
    </TaskButton>
    <TaskButton $w={76}>
      <Svg width="28" height="28" viewBox="0 0 28 28" fill="none">
        <path d="M21 17a8 8 0 1 1 1-4H7" stroke="#6cc7ee" strokeWidth="4.500" />
        <path d="M3 25C-2 20 16 3 26 5" stroke="#e7bd54" strokeWidth="2" />
      </Svg>
    </TaskButton>
    <TaskButton $w={49}>
      <Svg width="26" height="26" viewBox="0 0 26 26">
        <path d="M9 0h16v19H9z" fill="#d3d3d3" opacity=".8" />
        <path d="M1 4h17v19H1z" fill="#e27a35" />
        <circle cx="9" cy="13" r="7" fill="#f6d9c4" />
        <path d="M7 9v8l6-4z" fill="#dd5f22" />
      </Svg>
    </TaskButton>
    <TaskButton $w={54} $framed>
      <Svg width="28" height="28" viewBox="0 0 28 28">
        <circle cx="14" cy="14" r="13" fill="#f0c331" />
        <path d="M14 14L2.700 7.500A13 13 0 0 1 25.500 8z" fill="#da4b3c" />
        <path d="M14 14L2.700 7.500A13 13 0 0 0 13 27z" fill="#45a45a" />
        <circle cx="14" cy="14" r="6" fill="#fff" />
        <circle cx="14" cy="14" r="4.800" fill="#3f7fd3" />
      </Svg>
    </TaskButton>
    <TaskButton $w={54} $framed>
      <Svg width="32" height="28" viewBox="0 0 32 28">
        <path d="M2 6l4-3h9l2 3h12v19H3z" fill="#e9cf78" />
        <path d="M7 1h4v6H7z" fill="#57a35c" />
        <path d="M17 3h8v5h-8z" fill="#c65b4d" />
        <path d="M1 9h29l-2 16H3z" fill="#f6e7a4" />
        <path d="M6 27V17h20v10M11 27v-6h10v6" fill="none" stroke="#8fc4e4" strokeWidth="3" />
      </Svg>
    </TaskButton>
    <TaskButton $w={54} $framed>
      <Svg width="30" height="26" viewBox="0 0 30 26">
        <path d="M5 2l12 2-3 16-13-3z" fill="#9fd39a" />
        <path d="M9 5l11 1v16l-12-1z" fill="#a8d3f0" />
        <path d="M12 8l14-4 4 15-15 5z" fill="#f3e071" />
      </Svg>
    </TaskButton>
    <TaskButton $w={54} $framed $active>
      <ExcelIcon size={28} />
    </TaskButton>
    <TaskButton $w={54} $framed>
      <Svg width="30" height="30" viewBox="0 0 30 30">
        <circle cx="15" cy="15" r="13.500" fill="none" stroke="#80b0dc" strokeWidth="2" />
        <circle cx="15" cy="15" r="5" fill="#86c0f0" />
      </Svg>
    </TaskButton>
  </>
);

export default function App() {
  return (
    <Screen>
      <GlobalStyle />
      <Window>
        <WindowTop />
        <Ribbon>
          <ClipboardGroup />
          <FontGroup />
          <AlignGroup />
          <NumberGroup />
          <StylesGroup />
          <CellsGroup />
          <EditGroup />
          <Slot $w={33} $justify="flex-end">
            <Svg width="8" height="5" viewBox="0 0 8 5" transform="translate(0 36)">
              <path d="M.5 4.500L4 1l3.500 3.500" fill="none" stroke="#666" strokeWidth="1.600" />
            </Svg>
          </Slot>
        </Ribbon>
        <FormulaBar>
          <NameBox $w={95} $pl={6}>
            H2
            <Caret color="#777" size={7} />
          </NameBox>
          <Slot $w={28}>
            <Svg width="2" height="10" viewBox="0 0 2 10" fill="#aaa">
              <path d="M0 0h2v2H0zM0 4h2v2H0zM0 8h2v2H0z" />
            </Svg>
          </Slot>
          <FormulaBox $w={103}>
            <Slot $w={33}>
              <Svg width="16" height="14" viewBox="0 0 16 14">
                <path d="M1 1l14 12M14 1L2 13" stroke="#666" strokeWidth="2.200" />
              </Svg>
            </Slot>
            <Slot $w={34}>
              <Svg width="18" height="14" viewBox="0 0 18 14">
                <path d="M1.500 7.500L7 12 17 1.500" fill="none" stroke="#666" strokeWidth="3" />
              </Svg>
            </Slot>
            <Slot $w={33}>
              <Fx>fx</Fx>
            </Slot>
          </FormulaBox>
          <Slot $w={3} />
          <FormulaBox $pl={10}>
            <FormulaText>=avdrag(H3; H5; -H2)</FormulaText>
            <Svg width="10" height="7" viewBox="0 0 10 7">
              <path d="M1 1l4 4 4-4" fill="none" stroke="#555" strokeWidth="2.400" />
            </Svg>
          </FormulaBox>
        </FormulaBar>
        <Sheet />
        <BottomBars />
        <Taskbar>
          <TaskIcons />
          <Slot $w={631} />
          <Lang>NO</Lang>
          <Slot $w={17}>
            <Svg width="8" height="4" viewBox="0 0 8 4">
              <path d="M0 4h8L4 0z" fill="#e8f0f6" />
            </Svg>
          </Slot>
          <Slot $w={28}>
            <Svg width="14" height="14" viewBox="0 0 14 14">
              <path d="M1.500 0v14" stroke="#e8f0f6" strokeWidth="1.400" />
              <path d="M3 1h5v2h5l-2 3 1 2H7V7H3z" fill="#fff" />
            </Svg>
          </Slot>
          <Slot $w={20}>
            <Svg width="14" height="12" viewBox="0 0 14 12" fill="#e8f0f6">
              <path d="M0 9h2v3H0zM3 7h2v5H3zM6 5h2v7H6zM9 3h2v9H9zM12 0h2v12h-2z" />
            </Svg>
          </Slot>
          <Slot $w={9} />
          <Clock>
            08:59
            <br />
            01.04.2016
          </Clock>
          <ShowDesktop />
        </Taskbar>
      </Window>
      <Tooltip>
        AVDRAG(rente; antall_innbet; <b>nåverdi</b>; [sluttverdi]; [type])
      </Tooltip>
      <CrossCursor width="17" height="17" viewBox="0 0 17 17">
        <path d="M6 1h5v5h5v5h-5v5H6v-5H1V6h5z" fill="#fff" stroke="#222" />
      </CrossCursor>
      <Watermark>
        <WatermarkSmall>RECORDED WITH</WatermarkSmall>
        <WatermarkLarge>
          <WatermarkWord $w={114}>SCREENCAST</WatermarkWord>
          <Slot $w={36} $justify="flex-start">
            <Svg width="32" height="32" viewBox="0 0 32 32">
              <circle cx="16" cy="16" r="14" fill="none" stroke="#2d567d" strokeWidth="4" />
              <circle cx="16" cy="16" r="14" fill="none" stroke="#87b2d8" strokeWidth="1.500" />
              <circle cx="16" cy="16" r="5.500" fill="#6aa3d6" stroke="#2d567d" />
            </Svg>
          </Slot>
          <WatermarkWord $ls={0.8}>MATIC</WatermarkWord>
        </WatermarkLarge>
      </Watermark>
    </Screen>
  );
}
